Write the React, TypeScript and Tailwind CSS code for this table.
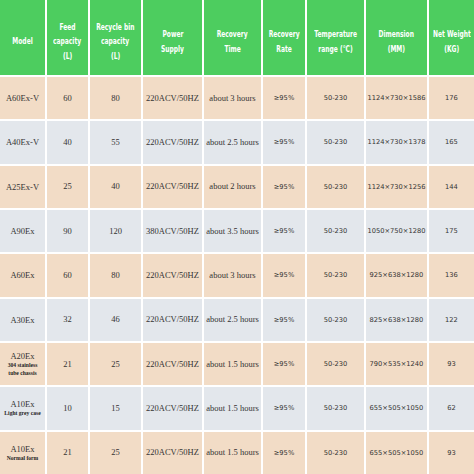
import React from "react";

type Row = {
  model: string;
  sub?: string[];
  feed: string;
  bin: string;
  power: string;
  time: string;
  rate: string;
  temp: string;
  dim: string;
  weight: string;
};

const rows: Row[] = [
  { model: "A60Ex-V", feed: "60", bin: "80", power: "220ACV/50HZ", time: "about 3 hours", rate: "≥95%", temp: "50-230", dim: "1124×730×1586", weight: "176" },
  { model: "A40Ex-V", feed: "40", bin: "55", power: "220ACV/50HZ", time: "about 2.5 hours", rate: "≥95%", temp: "50-230", dim: "1124×730×1378", weight: "165" },
  { model: "A25Ex-V", feed: "25", bin: "40", power: "220ACV/50HZ", time: "about 2 hours", rate: "≥95%", temp: "50-230", dim: "1124×730×1256", weight: "144" },
  { model: "A90Ex", feed: "90", bin: "120", power: "380ACV/50HZ", time: "about 3.5 hours", rate: "≥95%", temp: "50-230", dim: "1050×750×1280", weight: "175" },
  { model: "A60Ex", feed: "60", bin: "80", power: "220ACV/50HZ", time: "about 3 hours", rate: "≥95%", temp: "50-230", dim: "925×638×1280", weight: "136" },
  { model: "A30Ex", feed: "32", bin: "46", power: "220ACV/50HZ", time: "about 2.5 hours", rate: "≥95%", temp: "50-230", dim: "825×638×1280", weight: "122" },
  { model: "A20Ex", sub: ["304 stainless", "tube chassis"], feed: "21", bin: "25", power: "220ACV/50HZ", time: "about 1.5 hours", rate: "≥95%", temp: "50-230", dim: "790×535×1240", weight: "93" },
  { model: "A10Ex", sub: ["Light grey case"], feed: "10", bin: "15", power: "220ACV/50HZ", time: "about 1.5 hours", rate: "≥95%", temp: "50-230", dim: "655×505×1050", weight: "62" },
  { model: "A10Ex", sub: ["Normal form"], feed: "21", bin: "25", power: "220ACV/50HZ", time: "about 1.5 hours", rate: "≥95%", temp: "50-230", dim: "655×505×1050", weight: "93" },
];

const headers: string[][] = [
  ["Model"],
  ["Feed", "capacity", "(L)"],
  ["Recycle bin", "capacity", "(L)"],
  ["Power", "Supply"],
  ["Recovery", "Time"],
  ["Recovery", "Rate"],
  ["Temperature", "range (°C)"],
  ["Dimension", "(MM)"],
  ["Net Weight", "(KG)"],
];

const serif = "font-['Liberation_Serif',serif] text-[8.5px] text-[#333333]";
const sans = "font-['DejaVu_Sans',sans-serif] text-[6.7px] text-[#333333]";

export default function App() {
  return (
    <div className="w-[474px] h-[474px] bg-white overflow-hidden">
      <div className="grid h-[474px] grid-cols-[45px_41px_51px_59px_57px_42px_57px_61px_45px] grid-rows-[75px_repeat(9,minmax(0,1fr))] gap-[2px]">
        {headers.map((h, i) => (
          <div
            key={"h" + i}
            className="bg-[#4dcd5f] flex flex-col items-center justify-center text-center text-white font-['DejaVu_Sans',sans-serif] font-bold text-[8.5px] leading-[14.5px] pt-[8px] min-w-0"
          >
            {h.map((l, j) => (
              <span key={j} className="inline-block whitespace-nowrap scale-x-[0.7]">
                {l}
              </span>
            ))}
          </div>
        ))}
        {rows.map((r, i) => {
          const bg = i % 2 === 0 ? "bg-[#f2dcc6]" : "bg-[#e3e7ec]";
          const cell = `${bg} flex items-center justify-center text-center whitespace-nowrap min-w-0`;
          return (
            <React.Fragment key={"r" + i}>
              <div className={`${bg} flex flex-col items-center justify-center text-center min-w-0`}>
                <span className={`${serif} leading-[10px]`}>{r.model}</span>
                {r.sub?.map((s, j) => (
                  <span
                    key={j}
                    className="font-['Liberation_Serif',serif] font-bold text-[5.6px] leading-[8px] text-[#222222] whitespace-nowrap"
                  >
                    {s}
                  </span>
                ))}
              </div>
              <div className={`${cell} ${serif}`}>{r.feed}</div>
              <div className={`${cell} ${serif}`}>{r.bin}</div>
              <div className={`${cell} ${serif}`}>{r.power}</div>
              <div className={`${cell} ${serif}`}>{r.time}</div>
              <div className={`${cell} ${sans}`}>{r.rate}</div>
              <div className={`${cell} ${sans}`}>{r.temp}</div>
              <div className={`${cell} ${sans}`}>{r.dim}</div>
              <div className={`${cell} ${sans}`}>{r.weight}</div>
            </React.Fragment>
          );
        })}
      </div>
    </div>
  );
}
